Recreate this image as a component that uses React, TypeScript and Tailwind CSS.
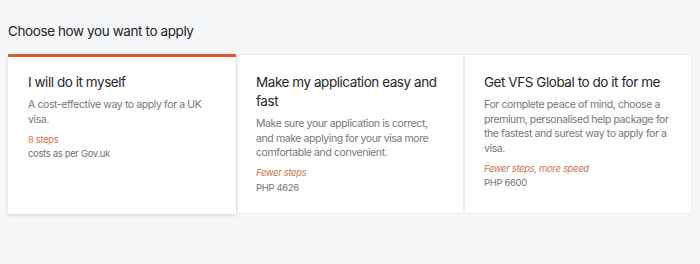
import React from "react";

const cards = [
  {
    title: "I will do it myself",
    desc: "A cost-effective way to apply for a UK visa.",
    tag: "8 steps",
    italic: false,
    price: "costs as per Gov.uk",
    selected: true,
  },
  {
    title: "Make my application easy and fast",
    desc: "Make sure your application is correct, and make applying for your visa more comfortable and convenient.",
    tag: "Fewer steps",
    italic: true,
    price: "PHP 4626",
    selected: false,
  },
  {
    title: "Get VFS Global to do it for me",
    desc: "For complete peace of mind, choose a premium, personalised help package for the fastest and surest way to apply for a visa.",
    tag: "Fewer steps, more speed",
    italic: true,
    price: "PHP 6600",
    selected: false,
  },
];

export default function App() {
  return (
    <div
      className="w-[700px] h-[264px] bg-[#f6f7f9] overflow-hidden"
      style={{ fontFamily: "Inter, 'Noto Sans', sans-serif" }}
    >
      <h2 className="pt-[21px] pl-[8px] text-[13.5px] leading-[20px] tracking-[-0.4px] text-[#222428] font-normal">
        Choose how you want to apply
      </h2>
      <div className="mt-[13px] mx-[8px] grid grid-cols-[228px_228px_228px] h-[160px]">
        {cards.map((c, i) => (
          <div
            key={i}
            className={
              c.selected
                ? "bg-white border-t-[3px] border-[#e0592a] shadow-[0_1px_4px_rgba(0,0,0,0.15)] pt-[16px] pl-[20px] pr-[20px] z-10"
                : "bg-white border border-[#eceef1] pt-[18px] pl-[19px] pr-[19px]"
            }
          >
            <div className="text-[13.5px] leading-[19px] tracking-[-0.45px] text-[#25272b]">{c.title}</div>
            <div className="mt-[6px] text-[10.5px] leading-[14.5px] tracking-[-0.4px] text-[#74787f]">{c.desc}</div>
            <div
              className={
                "mt-[5.5px] text-[9.5px] leading-[14.5px] tracking-[-0.35px] " +
                (c.italic ? "italic text-[#c8754f]" : "text-[#e0704e]")
              }
            >
              {c.tag}
            </div>
            <div className="text-[9.5px] leading-[14.5px] tracking-[-0.35px] text-[#6f737a]">{c.price}</div>
          </div>
        ))}
      </div>
    </div>
  );
}
